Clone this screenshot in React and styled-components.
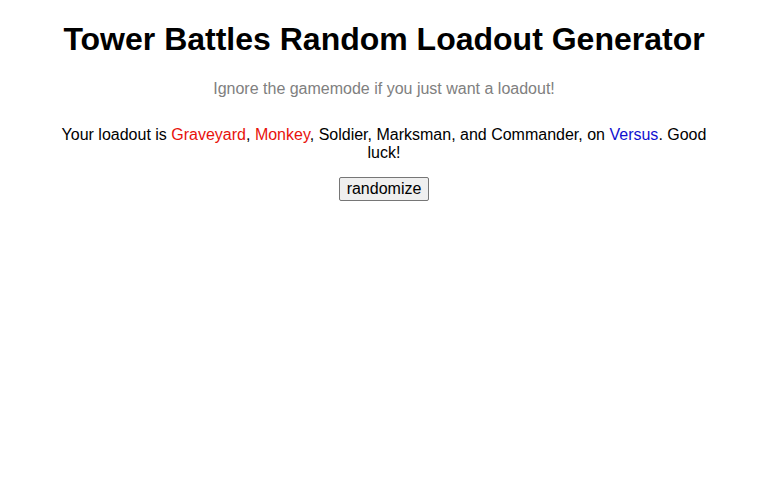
import React, { useState } from 'react'
import styled, { createGlobalStyle } from 'styled-components'

const GlobalStyle = createGlobalStyle`
  body {
    margin: 0;
    background: #ffffff;
    font-family: 'Liberation Sans', Arial, sans-serif;
  }
`

const towers = ['Graveyard', 'Monkey', 'Soldier', 'Marksman', 'Commander']
const special = ['Graveyard', 'Monkey']

const App = () => {
  const [loadout] = useState(towers)
  return (
    <>
      <GlobalStyle />
      <Page>
        <Title>Tower Battles Random Loadout Generator</Title>
        <Subtitle>Ignore the gamemode if you just want a loadout!</Subtitle>
        <Result>
          Your loadout is{' '}
          {loadout.map((t, i) => (
            <React.Fragment key={t}>
              {i === loadout.length - 1 && 'and '}
              <Tower special={special.includes(t)}>{t}</Tower>
              {', '}
            </React.Fragment>
          ))}
          on <Mode>Versus</Mode>. Good luck!
        </Result>
        <Button>randomize</Button>
      </Page>
    </>
  )
}

const Page = styled.div`
  display: flex;
  flex-direction: column;
  align-items: center;
  text-align: center;
  padding: 0 50px;
`

const Title = styled.h1`
  font-size: 32px;
  font-weight: bold;
  color: #000;
  margin: 21px 0 22px;
  line-height: 37px;
`

const Subtitle = styled.p`
  font-size: 16px;
  color: #808080;
  margin: 0 0 28px;
  line-height: 18px;
`

const Result = styled.p`
  font-size: 16px;
  color: #000;
  margin: 0 0 15px;
  line-height: 18px;
  max-width: 652px;
`

const Tower = styled.span`
  color: ${props => props.special ? '#e8120c' : 'inherit'};
`

const Mode = styled.span`
  color: #1010d0;
`

const Button = styled.button`
  font-family: 'Liberation Sans', Arial, sans-serif;
  font-size: 16px;
  padding: 1px 7px;
  height: 24px;
  border: 1px solid #767676;
  border-radius: 2px;
  background: #efefef;
  color: #000;
`

export default App
